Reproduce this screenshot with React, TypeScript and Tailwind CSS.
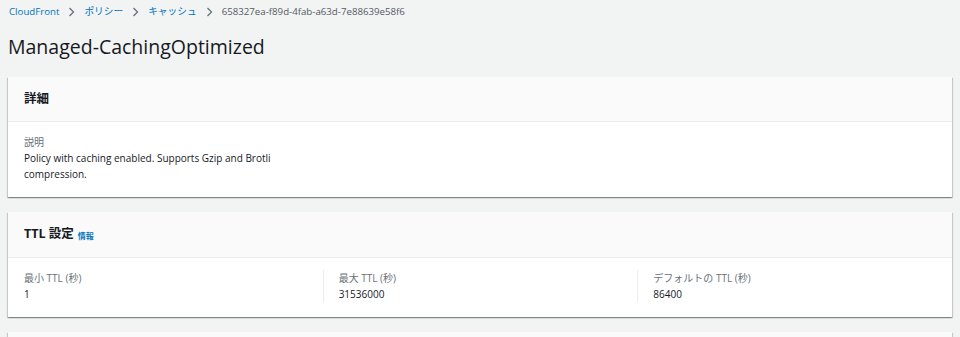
import React from "react";

const Chevron = () => (
  <svg width="9" height="10" viewBox="0 0 9 10" className="shrink-0" fill="none">
    <path d="M2.5 1 L6.5 5 L2.5 9" stroke="#687078" strokeWidth="1.3" />
  </svg>
);

const shadow =
  "bg-white shadow-[0_1px_1px_0_rgba(0,28,36,0.3),1px_1px_1px_0_rgba(0,28,36,0.15),-1px_1px_1px_0_rgba(0,28,36,0.15)]";

export default function App() {
  const font = {
    fontFamily: '"Open Sans", "Noto Sans CJK JP", sans-serif',
  } as React.CSSProperties;
  return (
    <div
      className="w-[960px] h-[337px] overflow-hidden bg-[#f2f3f3] px-[8px] text-[#16191f]"
      style={font}
    >
      <div className="h-[24px] flex items-center gap-[8px] pl-[1px] text-[9.7px]">
        <span className="text-[#0073bb]">CloudFront</span>
        <Chevron />
        <span className="text-[#0073bb]">ポリシー</span>
        <Chevron />
        <span className="text-[#0073bb]">キャッシュ</span>
        <Chevron />
        <span className="text-[#545b64]">658327ea-f89d-4fab-a63d-7e88639e58f6</span>
      </div>
      <div className="h-[53px] flex items-center pb-[7px]">
        <h1 className="text-[19.5px] leading-none">Managed-CachingOptimized</h1>
      </div>

      <div className="flex flex-col gap-[15px]">
        <div className={shadow}>
          <div className="h-[45px] bg-[#fafafa] border-b border-[#eaeded] flex items-center px-[16px]">
            <h2 className="text-[12.5px] font-bold">詳細</h2>
          </div>
          <div className="grid grid-cols-3 pt-[12px] pb-[15px] text-[10px] leading-[16px]">
            <div className="pl-[16px] pr-[16px]">
              <div className="text-[#687078]">説明</div>
              <div>Policy with caching enabled. Supports Gzip and Brotli compression.</div>
            </div>
          </div>
        </div>

        <div className={shadow}>
          <div className="h-[46px] bg-[#fafafa] border-b border-[#eaeded] flex items-center gap-[4px] px-[16px]">
            <h2 className="text-[12.5px] font-bold">TTL 設定</h2>
            <span className="text-[8px] font-bold text-[#0073bb] pt-[2px]">情報</span>
          </div>
          <div className="grid grid-cols-3 pt-[12px] pb-[15px] text-[10px] leading-[16px]">
            <div className="pl-[16px] pr-[16px]">
              <div className="text-[#687078]">最小 TTL (秒)</div>
              <div>1</div>
            </div>
            <div className="pl-[15px] pr-[16px] border-l border-[#eaeded]">
              <div className="text-[#687078]">最大 TTL (秒)</div>
              <div>31536000</div>
            </div>
            <div className="pl-[15px] pr-[16px] border-l border-[#eaeded]">
              <div className="text-[#687078]">デフォルトの TTL (秒)</div>
              <div>86400</div>
            </div>
          </div>
        </div>

        <div className={shadow + " h-[40px]"}>
          <div className="h-[40px] bg-[#fafafa]" />
        </div>
      </div>
    </div>
  );
}
